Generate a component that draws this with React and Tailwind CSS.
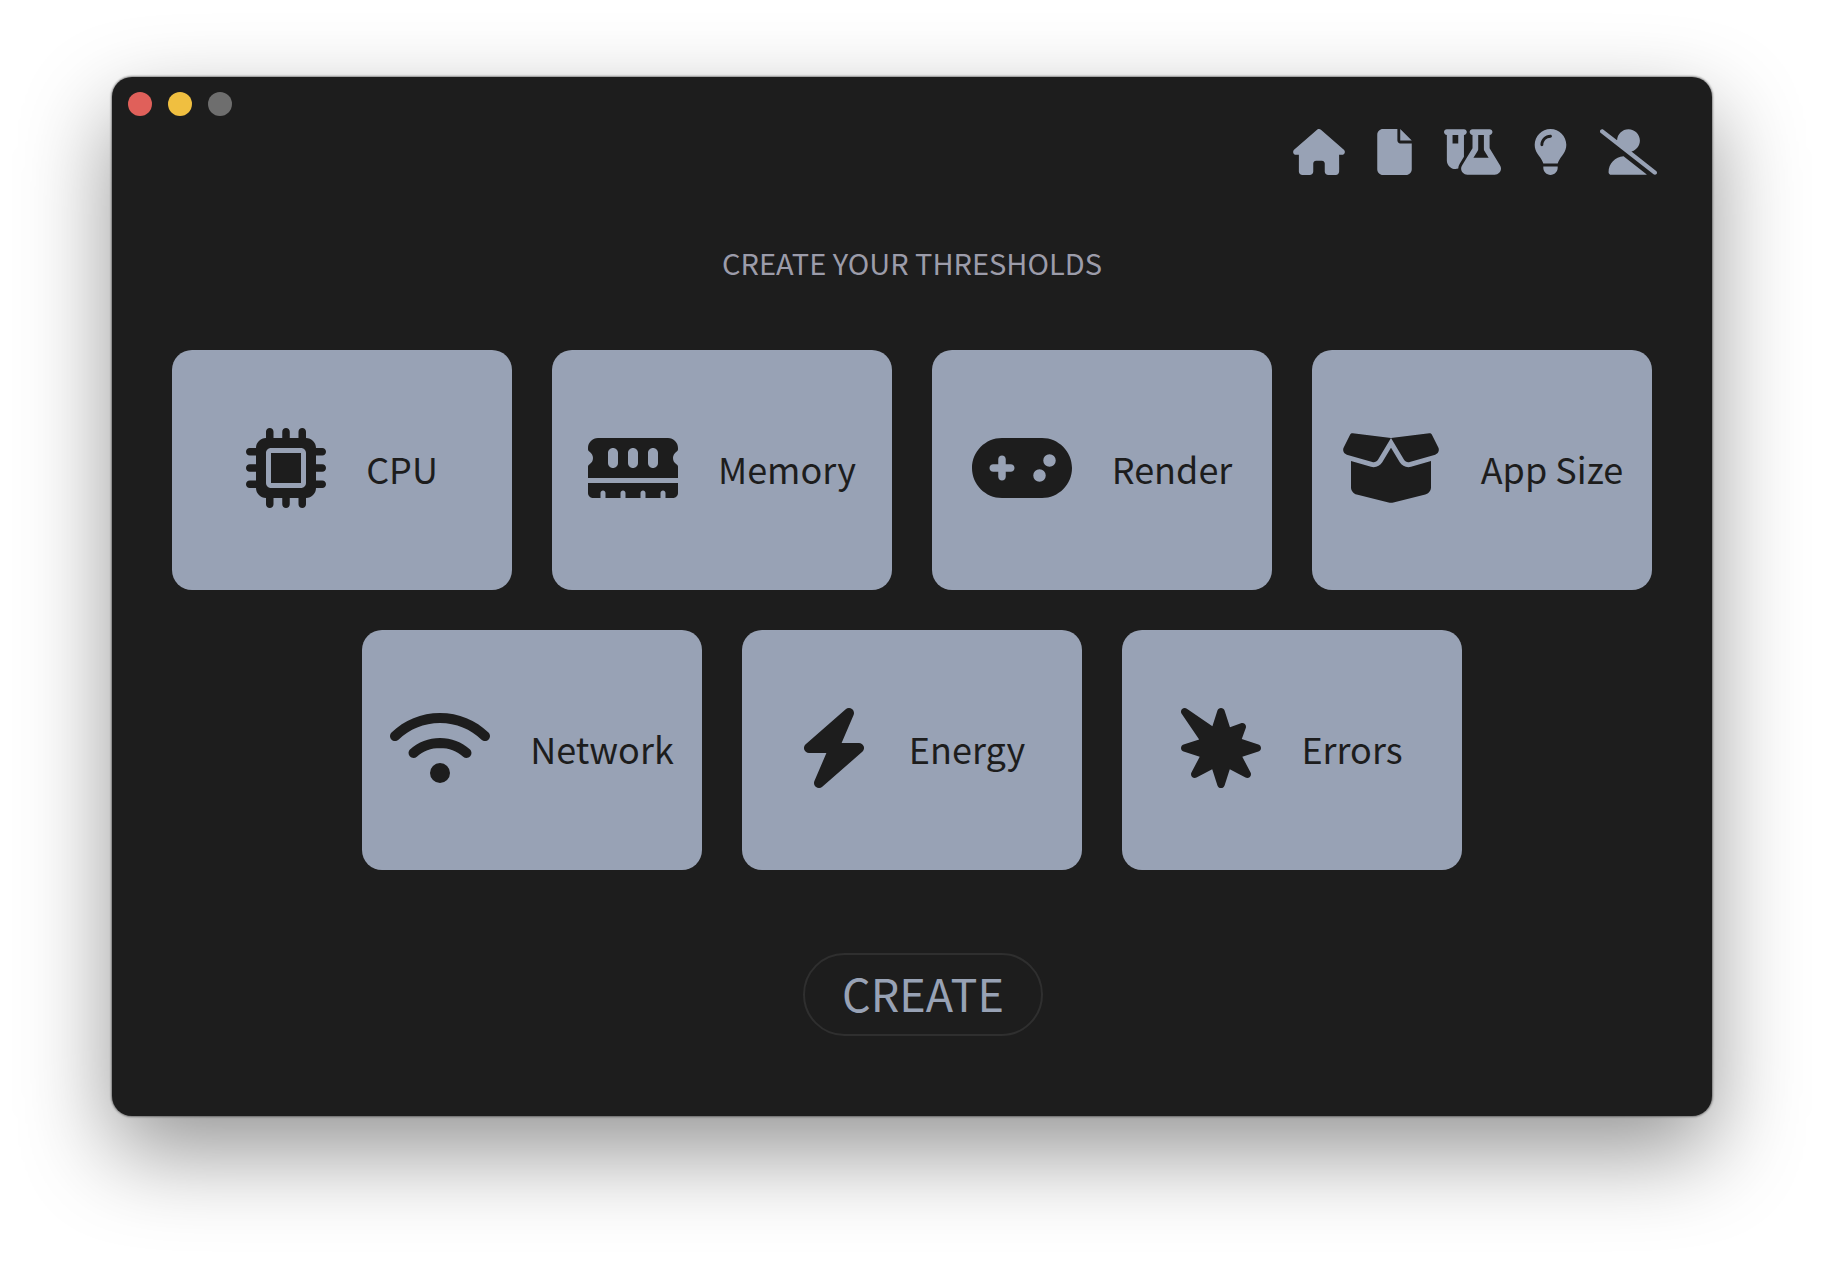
import {
  FaBolt,
  FaBoxOpen,
  FaBurst,
  FaFile,
  FaFlaskVial,
  FaGamepad,
  FaHouse,
  FaLightbulb,
  FaMemory,
  FaMicrochip,
  FaUserSlash,
  FaWifi,
} from "react-icons/fa6";

const navItems = [
  { label: "Home", Icon: FaHouse, width: "w-[52px]" },
  { label: "Reports", Icon: FaFile, width: "w-[35px]" },
  { label: "Tests", Icon: FaFlaskVial, width: "w-[57px]" },
  { label: "Tips", Icon: FaLightbulb, width: "w-[35px]" },
  { label: "Sign out", Icon: FaUserSlash, width: "w-[57px]" },
];

const metrics = [
  { label: "CPU", Icon: FaMicrochip, width: "w-20" },
  { label: "Memory", Icon: FaMemory, width: "w-[90px]" },
  { label: "Render", Icon: FaGamepad, width: "w-[100px]" },
  { label: "App Size", Icon: FaBoxOpen, width: "w-[100px]" },
  { label: "Network", Icon: FaWifi, width: "w-[100px]" },
  { label: "Energy", Icon: FaBolt, width: "w-[70px]" },
  { label: "Errors", Icon: FaBurst, width: "w-20" },
];

function TitleBar() {
  return (
    <div className="flex gap-4 px-4 pt-[15px]">
      <button aria-label="Close" className="size-6 rounded-full bg-[#e0605a]" />
      <button aria-label="Minimize" className="size-6 rounded-full bg-[#f0bf40]" />
      <button aria-label="Zoom" className="size-6 rounded-full bg-[#6e6e6e]" />
    </div>
  );
}

function Nav() {
  return (
    <nav className="flex justify-end gap-8 px-[55px] pt-[13px] text-[#98a2b5]">
      {navItems.map(({ label, Icon, width }) => (
        <a key={label} href="#" aria-label={label}>
          <Icon className={`h-[46px] ${width}`} />
        </a>
      ))}
    </nav>
  );
}

function MetricCard({ label, Icon, width }) {
  return (
    <button className="flex h-60 w-[340px] items-center justify-center gap-10 rounded-[20px] bg-[#98a2b5] pb-1 text-[#1d1d1d]">
      <Icon className={`h-20 shrink-0 ${width}`} />
      <span className="whitespace-nowrap text-4xl">{label}</span>
    </button>
  );
}

export default function App() {
  return (
    <div className="min-h-screen bg-white px-28 pt-[77px] pb-[148px] font-['Noto_Sans_CJK_JP','Noto_Sans',sans-serif]">
      <div className="rounded-[20px] bg-[#1d1d1d] pb-20 shadow-[0_0_2px_1px_rgba(0,0,0,0.4),0_36px_90px_rgba(0,0,0,0.42)]">
        <TitleBar />
        <Nav />
        <main className="flex flex-col items-center px-[60px] pt-[69px]">
          <h1 className="text-[29px] leading-9 text-[#9c9caa]">CREATE YOUR THRESHOLDS</h1>
          <div className="mt-[70px] flex flex-wrap justify-center gap-10">
            {metrics.map((metric) => (
              <MetricCard key={metric.label} {...metric} />
            ))}
          </div>
          <button className="mt-[83px] ml-[22px] rounded-full border-2 border-[#2f2f2f] px-[37px] pt-1.5 pb-2.5 text-[45px] leading-[63px] text-[#98a2b5]">
            CREATE
          </button>
        </main>
      </div>
    </div>
  );
}
